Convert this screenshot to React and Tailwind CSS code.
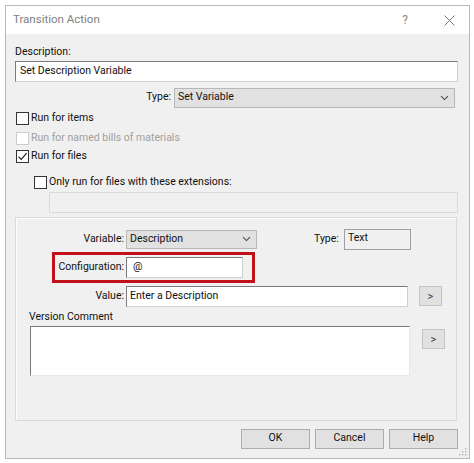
import React from "react";

const font = { fontFamily: "Roboto, 'Liberation Sans', sans-serif" };

function Chevron() {
  return (
    <svg width="9" height="6" viewBox="0 0 9 6" className="shrink-0">
      <path d="M1 1.2 L4.5 4.6 L8 1.2" fill="none" stroke="#4a4a4a" strokeWidth="1.1" />
    </svg>
  );
}

function Check({ checked, disabled }) {
  return (
    <span
      className={
        "flex h-[13px] w-[13px] shrink-0 items-center justify-center border bg-white " +
        (disabled ? "border-[#cccccc]" : "border-[#333333]")
      }
    >
      {checked && (
        <svg width="11" height="11" viewBox="0 0 11 11">
          <path d="M1.5 5.6 L4.2 8.3 L9.6 2.2" fill="none" stroke="#222" strokeWidth="1.2" />
        </svg>
      )}
    </span>
  );
}

function Row({ checked, disabled, children, className = "" }) {
  return (
    <div className={"flex h-[13px] items-center gap-[2px] " + className}>
      <Check checked={checked} disabled={disabled} />
      <span className={disabled ? "text-[#a0a0a0]" : "text-[#111]"}>{children}</span>
    </div>
  );
}

function Arrow({ className = "" }) {
  return (
    <button className={"flex h-[20px] w-[23px] items-center justify-center border border-[#c4c4c4] bg-[#e1e1e1] text-[11px] text-[#333] " + className}>
      &gt;
    </button>
  );
}

function Btn({ children }) {
  return (
    <button className="flex h-[20px] w-[69px] items-center justify-center border border-[#adadad] bg-[#e1e1e1] text-[#111]">
      {children}
    </button>
  );
}

export default function App() {
  return (
    <div className="h-[463px] w-[474px] bg-white pl-[5px] pt-[5px] text-[10.5px] leading-none" style={font}>
      <div className="flex h-[454px] w-[465px] flex-col border border-[#b9b9b9]">
        {/* title bar */}
        <div className="flex h-[28px] shrink-0 items-center bg-white pl-[7px] pr-[14px]">
          <span className="text-[11.5px] text-[#808080]">Transition Action</span>
          <span className="ml-auto mr-[36px] text-[12px] text-[#8a8a8a]">?</span>
          <svg width="11" height="11" viewBox="0 0 11 11">
            <path d="M0.5 0.5 L10.5 10.5 M10.5 0.5 L0.5 10.5" stroke="#777" strokeWidth="1" />
          </svg>
        </div>

        <div className="relative flex flex-1 flex-col bg-[#f0f0f0] pl-[9px] pr-[10px]">
          <div className="mt-[13px] text-[#111]">Description:</div>
          <div className="mt-[3px] flex h-[21px] w-[443px] items-center border border-[#7a7a7a] border-b-[#cfcfcf] border-r-[#cfcfcf] bg-white pl-[4px] text-[#111]">
            Set Description Variable
          </div>

          <div className="mt-[6px] flex h-[20px] items-center">
            <span className="w-[159px] pr-[3px] text-right text-[#111]">Type:</span>
            <div className="flex h-[20px] w-[281px] items-center border border-[#b8b8b8] bg-[#e1e1e1] pl-[3px] pr-[5px] text-[#111]">
              <span>Set Variable</span>
              <span className="ml-auto">
                <Chevron />
              </span>
            </div>
          </div>

          <Row className="ml-[1px] mt-[4px]">Run for items</Row>
          <Row className="ml-[1px] mt-[7px]" disabled>
            Run for named bills of materials
          </Row>
          <Row className="ml-[1px] mt-[5px]" checked>
            Run for files
          </Row>
          <Row className="ml-[19px] mt-[13px]">Only run for files with these extensions:</Row>

          <div className="ml-[34px] mt-[3px] h-[21px] w-[409px] border border-[#dadada] bg-[#f0f0f0]" />

          {/* group panel */}
          <div className="mt-[4px] flex h-[204px] w-[442px] flex-col border border-[#dadada] shadow-[inset_1px_1px_0_#ffffff]">
            <div className="mt-[11px] flex h-[21px] items-center">
              <span className="w-[110px] pr-[2px] text-right text-[#111]">Variable:</span>
              <div className="flex h-[19px] w-[131px] items-center border border-[#b8b8b8] bg-[#e1e1e1] pl-[3px] pr-[5px] text-[#111]">
                <span>Description</span>
                <span className="ml-auto">
                  <Chevron />
                </span>
              </div>
              <span className="ml-[57px] text-[#111]">Type:</span>
              <div className="ml-[5px] h-[21px] w-[67px] border border-[#a0a0a0] pl-[3px] pt-[3px] text-[#111]">Text</div>
            </div>

            <div className="ml-[36px] mt-[2px] flex h-[31px] w-[203px] items-center border-[3px] border-[#c0101a]">
              <span className="w-[71px] pr-[2px] text-right text-[#111]">Configuration:</span>
              <div className="flex h-[21px] w-[117px] items-center border border-[#7a7a7a] border-b-[#cfcfcf] border-r-[#cfcfcf] bg-white pl-[6px] text-[#111]">
                @
              </div>
            </div>

            <div className="mt-[3px] flex h-[21px] items-center">
              <span className="w-[110px] pr-[2px] text-right text-[#111]">Value:</span>
              <div className="flex h-[21px] w-[282px] items-center border border-[#7a7a7a] border-b-[#cfcfcf] border-r-[#cfcfcf] bg-white pl-[3px] text-[#111]">
                Enter a Description
              </div>
              <Arrow className="ml-[11px]" />
            </div>

            <div className="ml-[13px] mt-[5px] text-[#111]">Version Comment</div>
            <div className="mt-[4px] flex">
              <div className="ml-[14px] h-[50px] w-[380px] border border-[#7a7a7a] border-b-[#e8e8e8] border-r-[#e8e8e8] bg-white" />
              <Arrow className="ml-[12px] mt-[3px]" />
            </div>
          </div>

          <div className="mt-[8px] flex gap-[5px] pl-[226px]">
            <Btn>OK</Btn>
            <Btn>Cancel</Btn>
            <Btn>Help</Btn>
          </div>

          <svg className="absolute bottom-[2px] right-[2px]" width="8" height="8" viewBox="0 0 8 8">
            <rect x="6" y="0" width="1.4" height="1.4" fill="#b0b0b0" />
            <rect x="3" y="3" width="1.4" height="1.4" fill="#b0b0b0" />
            <rect x="6" y="3" width="1.4" height="1.4" fill="#b0b0b0" />
            <rect x="0" y="6" width="1.4" height="1.4" fill="#b0b0b0" />
            <rect x="3" y="6" width="1.4" height="1.4" fill="#b0b0b0" />
            <rect x="6" y="6" width="1.4" height="1.4" fill="#b0b0b0" />
          </svg>
        </div>
      </div>
    </div>
  );
}
